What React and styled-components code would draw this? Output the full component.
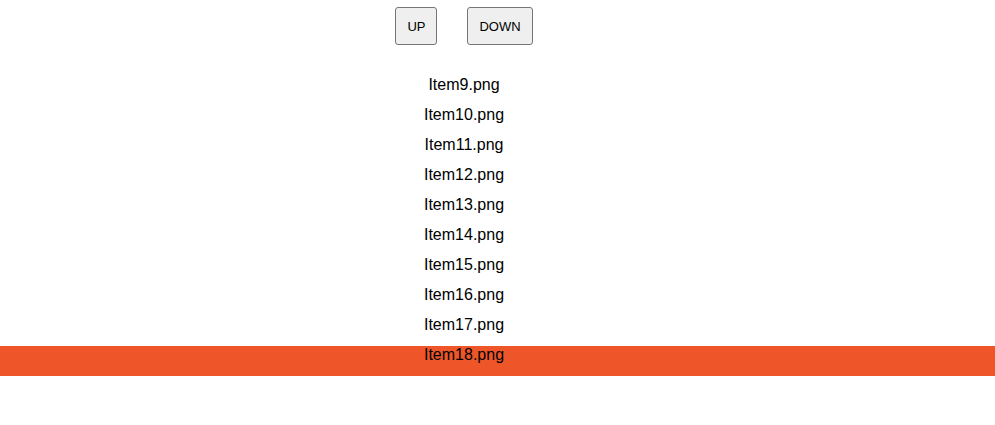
import React from 'react';
import styled, { createGlobalStyle } from 'styled-components';

const GlobalStyle = createGlobalStyle`
    body {
        margin: 0;
        font-family: "Liberation Sans", Arial, sans-serif;
        background: white;
    }
`;

const Page = styled.div`
    display: flex;
    flex-direction: column;
    width: 100%;
`;

const Toolbar = styled.div`
    display: flex;
    justify-content: center;
    gap: 30px;
    padding-top: 7px;
    padding-right: 67px;
`;

const Button = styled.button`
    height: 38px;
    padding: 0 ${(p) => p.$pad}px;
    font-family: "Liberation Sans", Arial, sans-serif;
    font-size: 13px;
    color: black;
    background: #efefef;
    border: 1px solid #767676;
    border-radius: 3px;
`;

const List = styled.ul`
    list-style: none;
    margin: 31px 0 0;
    padding: 0;
`;

const Row = styled.li`
    height: 30px;
    line-height: 18px;
    font-size: 16px;
    text-align: center;
    padding-right: 67px;
    color: black;
    background: ${(p) => (p.$active ? '#ee5629' : 'transparent')};
`;

const items = [9, 10, 11, 12, 13, 14, 15, 16, 17, 18];

const App = () => {
    return (
        <Page>
            <GlobalStyle />
            <Toolbar>
                <Button $pad={11}>UP</Button>
                <Button $pad={11}>DOWN</Button>
            </Toolbar>
            <List>
                {items.map((n) => (
                    <Row key={n} $active={n === 18}>
                        Item{n}.png
                    </Row>
                ))}
            </List>
        </Page>
    );
};

export default App;
